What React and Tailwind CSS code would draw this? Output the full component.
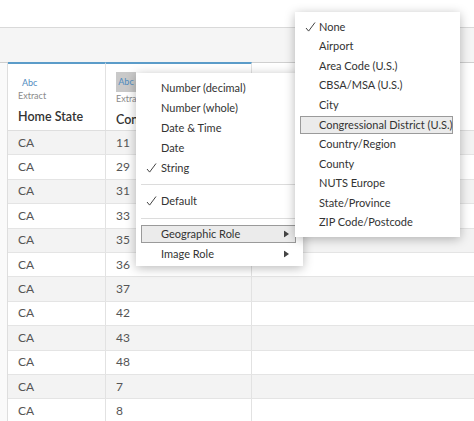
import React from 'react';

const rows = ['11', '29', '31', '33', '35', '36', '37', '42', '43', '48', '7', '8'];

const typeItems = [
  { label: 'Number (decimal)' },
  { label: 'Number (whole)' },
  { label: 'Date & Time' },
  { label: 'Date' },
  { label: 'String', checked: true },
];

const geoItems = [
  { label: 'None', checked: true },
  { label: 'Airport' },
  { label: 'Area Code (U.S.)' },
  { label: 'CBSA/MSA (U.S.)' },
  { label: 'City' },
  { label: 'Congressional District (U.S.)', active: true },
  { label: 'Country/Region' },
  { label: 'County' },
  { label: 'NUTS Europe' },
  { label: 'State/Province' },
  { label: 'ZIP Code/Postcode' },
];

function Check({ className }) {
  return (
    <svg width="11" height="11" viewBox="0 0 11 11" className={className}>
      <path d="M1 6.5 L3.6 9.6 L10 1" fill="none" stroke="#444" strokeWidth="1" />
    </svg>
  );
}

function Arrow() {
  return (
    <svg width="5" height="7" viewBox="0 0 5 7" className="absolute right-[14px] top-1/2 -translate-y-1/2">
      <path d="M0 0 L5 3.5 L0 7 Z" fill="#444" />
    </svg>
  );
}

function MenuItem({ label, checked, active, arrow, pad = 'pl-[25px]', h = 'h-5' }) {
  return (
    <div className={`relative flex items-center ${h} ${pad}`}>
      {active && (
        <div className="absolute left-[5px] right-[7px] top-px bottom-px bg-[#ebebeb] border border-[#9a9a9a]" />
      )}
      {checked && <Check className="absolute left-[10px] top-1/2 -translate-y-1/2" />}
      <span className="relative whitespace-nowrap">{label}</span>
      {arrow && <Arrow />}
    </div>
  );
}

export default function App() {
  return (
    <div
      className="relative w-[474px] h-[421px] overflow-hidden bg-white text-[#333]"
      style={{ fontFamily: 'Lato, "Open Sans", sans-serif' }}
    >
      <div className="h-[28px] bg-white border-b border-[#d9d9d9]" />
      <div className="h-[35px] bg-[#f5f5f5] border-b border-[#cfcfcf]" />

      <div className="flex">
        <div className="w-[8px] shrink-0 border-r border-[#dedede] bg-[#fafafa]" />
        <div className="flex-1">
          {/* header */}
          <div className="flex h-[68px] -mt-px">
            <div className="w-[98px] border-t-2 border-[#5b9cc9] border-r border-r-[#e2e2e2] pl-[10px] pt-[13px]">
              <div className="pl-[4px] text-[9px] leading-[12px] text-[#4f8cc0]">Abc</div>
              <div className="text-[9px] leading-[14px] text-[#8a8a8a]">Extract</div>
              <div className="mt-[6px] text-[12.5px] font-semibold leading-[15px] text-[#333]">Home State</div>
            </div>
            <div className="w-[146px] border-t-2 border-[#5b9cc9] border-r border-r-[#e2e2e2] pl-[10px] pt-[8px]">
              <div className="w-[26px] overflow-hidden whitespace-nowrap">
                <div className="w-[20px] h-[20px] bg-[#c9c9c9] flex items-center justify-center text-[9px] text-[#4f8cc0]">Abc</div>
                <div className="text-[9px] leading-[14px] text-[#8a8a8a]">Extra</div>
                <div className="mt-[6px] text-[12.5px] font-semibold leading-[15px] text-[#333]">Con</div>
              </div>
            </div>
            <div className="flex-1 border-t border-[#cfcfcf]" />
          </div>
          {/* rows */}
          <div className="border-t border-[#dedede]">
            {rows.map((n, i) => (
              <div
                key={i}
                className={`flex h-[24.4px] border-b border-[#e4e4e4] text-[12px] text-[#555] ${i % 2 === 0 ? 'bg-[#f3f3f3]' : 'bg-white'}`}
              >
                <div className="w-[98px] border-r border-[#e2e2e2] pl-[10px] flex items-center">CA</div>
                <div className="w-[146px] border-r border-[#e2e2e2] pl-[10px] flex items-center">{n}</div>
                <div className="flex-1" />
              </div>
            ))}
          </div>
        </div>
      </div>

      {/* data type context menu */}
      <div className="absolute left-[136px] top-[73px] w-[167px] bg-white shadow-[0_2px_10px_rgba(0,0,0,0.28)] pt-[5px] pb-[2px] text-[11px] text-[#333]">
        {typeItems.map((it) => (
          <MenuItem key={it.label} {...it} />
        ))}
        <div className="mx-[5px] my-[6px] border-t border-[#dcdcdc]" />
        <MenuItem label="Default" checked />
        <div className="mx-[5px] mt-[7px] mb-[5px] border-t border-[#dcdcdc]" />
        <MenuItem label="Geographic Role" active arrow />
        <MenuItem label="Image Role" arrow />
      </div>

      {/* geographic role submenu */}
      <div className="absolute left-[295px] top-[12px] w-[165px] bg-white shadow-[0_2px_10px_rgba(0,0,0,0.28)] pt-[5px] pb-[4px] text-[11px] text-[#333]">
        {geoItems.map((it) => (
          <MenuItem key={it.label} {...it} pad="pl-[24px]" h="h-[19.6px]" />
        ))}
      </div>
    </div>
  );
}
